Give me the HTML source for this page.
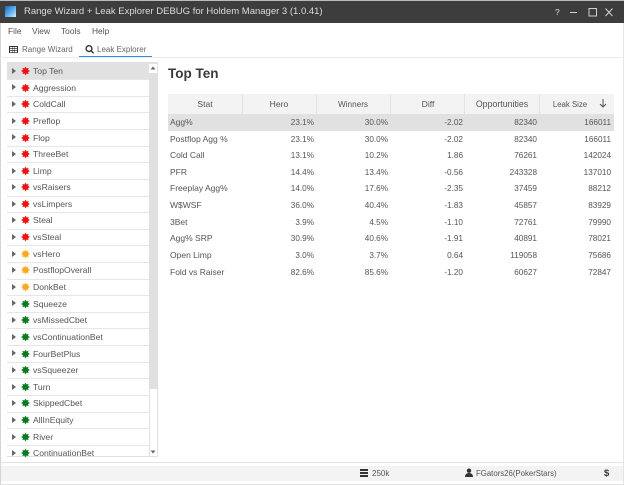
<!DOCTYPE html>
<html><head><meta charset="utf-8"><style>
html,body{margin:0;padding:0;background:#fff}
#w{position:relative;width:624px;height:485px;overflow:hidden;background:#fff;font:8.5px/12px "Liberation Sans",sans-serif;color:#555}
#w div,#w svg{position:absolute}
.t{white-space:nowrap}
.m{top:24.5px;font-size:8.4px;color:#555;white-space:nowrap}
.n{font-size:8.2px;text-align:right;width:60px;white-space:nowrap;margin-top:1px}
.h{font-size:8.6px;text-align:center;top:98px;width:74px;color:#555;white-space:nowrap}
.l{left:33px;white-space:nowrap;color:#555;font-size:8.6px}
.a{left:12px;width:0;height:0;border-left:4px solid #666;border-top:3.5px solid transparent;border-bottom:3.5px solid transparent}
.s{left:21px;width:9px;height:9px;margin-top:-.5px;background:currentColor;clip-path:polygon(50% 0,62% 22%,85% 15%,78% 38%,100% 50%,78% 62%,85% 85%,62% 78%,50% 100%,38% 78%,15% 85%,22% 62%,0 50%,22% 38%,15% 15%,38% 22%)}
.sep{left:7px;width:142px;height:1px;background:#e6e6e6}
</style></head><body><div id="w">
<div style="left:0;top:0;width:624px;height:1px;background:#bbb"></div>
<div style="left:0;top:1px;width:624px;height:22px;background:#3d3d3d"></div>
<div style="left:0;top:23px;width:1px;height:462px;background:#d4d4d4"></div>
<div style="left:623px;top:23px;width:1px;height:462px;background:#e4e4e4"></div>
<div style="left:5px;top:6px;width:11px;height:11px;background:linear-gradient(135deg,#1a63b8,#5fb3ef 55%,#d6eefc)"></div>
<div class="t" style="left:24px;top:5px;color:#dcdcdc;font-size:9.5px;line-height:13px">Range Wizard + Leak Explorer DEBUG for Holdem Manager 3 (1.0.41)</div>
<div class="t" style="left:555px;top:5.5px;color:#ddd;font-size:8.5px">?</div>
<svg style="left:568px;top:5px" width="52" height="14" fill="none" stroke="#d0d0d0" stroke-width="1"><path d="M2 7.5h7"/><path d="M21 3.5h7.5v7.5H21z"/><path d="M37.5 3.5l7 7.5M44.5 3.5l-7 7.5"/></svg>

<div class="m" style="left:8px">File</div>
<div class="m" style="left:32px">View</div>
<div class="m" style="left:61px">Tools</div>
<div class="m" style="left:92px">Help</div>

<svg style="left:9px;top:45px" width="10" height="9" fill="#333"><path d="M0 1h9v7H0zM1 2v1.2h2V2zm2.5 0v1.2h2V2zM6 2v1.2h2V2zM1 4v1.2h2V4zm2.5 0v1.2h2V4zM6 4v1.2h2V4zM1 6v1.2h2V6zm2.5 0v1.2h2V6zM6 6v1.2h2V6z" fill-rule="evenodd"/></svg>
<div class="t" style="left:22px;top:44px;font-size:8px;color:#666">Range Wizard</div>
<svg style="left:85px;top:45px" width="10" height="10" fill="none" stroke="#333" stroke-width="1.4"><circle cx="4" cy="3.6" r="2.9"/><path d="M6 5.6l2.6 2.6"/></svg>
<div class="t" style="left:97px;top:44px;font-size:8px;color:#666">Leak Explorer</div>
<div style="left:79px;top:55.5px;width:73px;height:1.5px;background:#2f8fdc"></div>
<div style="left:0;top:57px;width:624px;height:1px;background:#ececec"></div>

<div style="left:7px;top:62px;width:151px;height:395px;border-right:1px solid #e0e0e0;border-bottom:1px solid #e0e0e0;box-sizing:border-box"></div>
<div style="left:7px;top:62px;width:142px;height:17px;background:#e1e1e1"></div>
<div style="left:149px;top:62px;width:8px;height:327px;background:#e0e0e0"></div>
<div style="left:149px;top:64px;width:8px;height:9px;background:#fff"></div>
<div style="left:149px;top:389px;width:8px;height:67px;background:#fff;border-left:1px solid #e0e0e0;box-sizing:border-box"></div>
<svg style="left:149px;top:65px" width="8" height="6"><path d="M1.5 4.5L4 1.5l2.5 3z" fill="#666"/></svg>
<svg style="left:149px;top:449px" width="8" height="6"><path d="M1.5 1.5L4 4.5l2.5-3z" fill="#666"/></svg>

<div class="sep" style="top:79px"></div><div class="sep" style="top:96px"></div><div class="sep" style="top:112px"></div><div class="sep" style="top:129px"></div><div class="sep" style="top:146px"></div><div class="sep" style="top:162px"></div><div class="sep" style="top:179px"></div><div class="sep" style="top:196px"></div><div class="sep" style="top:212px"></div><div class="sep" style="top:229px"></div><div class="sep" style="top:245px"></div><div class="sep" style="top:262px"></div><div class="sep" style="top:279px"></div><div class="sep" style="top:295px"></div><div class="sep" style="top:312px"></div><div class="sep" style="top:328px"></div><div class="sep" style="top:345px"></div><div class="sep" style="top:362px"></div><div class="sep" style="top:378px"></div><div class="sep" style="top:395px"></div><div class="sep" style="top:412px"></div><div class="sep" style="top:428px"></div><div class="sep" style="top:445px"></div>

<div class="a" style="top:67.5px"></div><div class="s" style="top:67px;color:#f01010"></div><div class="l" style="top:65px">Top Ten</div>
<div class="a" style="top:84px"></div><div class="s" style="top:84px;color:#f01010"></div><div class="l" style="top:82px">Aggression</div>
<div class="a" style="top:101px"></div><div class="s" style="top:100px;color:#f01010"></div><div class="l" style="top:98px">ColdCall</div>
<div class="a" style="top:117.5px"></div><div class="s" style="top:117px;color:#f01010"></div><div class="l" style="top:115px">Preflop</div>
<div class="a" style="top:134px"></div><div class="s" style="top:134px;color:#f01010"></div><div class="l" style="top:132px">Flop</div>
<div class="a" style="top:151px"></div><div class="s" style="top:150px;color:#f01010"></div><div class="l" style="top:148px">ThreeBet</div>
<div class="a" style="top:167.5px"></div><div class="s" style="top:167px;color:#f01010"></div><div class="l" style="top:165px">Limp</div>
<div class="a" style="top:184px"></div><div class="s" style="top:183px;color:#f01010"></div><div class="l" style="top:181px">vsRaisers</div>
<div class="a" style="top:200.5px"></div><div class="s" style="top:200px;color:#f01010"></div><div class="l" style="top:198px">vsLimpers</div>
<div class="a" style="top:217px"></div><div class="s" style="top:216px;color:#f01010"></div><div class="l" style="top:214px">Steal</div>
<div class="a" style="top:234px"></div><div class="s" style="top:233px;color:#f01010"></div><div class="l" style="top:231px">vsSteal</div>
<div class="a" style="top:250.5px"></div><div class="s" style="top:250px;color:#ffa81c"></div><div class="l" style="top:248px">vsHero</div>
<div class="a" style="top:267px"></div><div class="s" style="top:266px;color:#ffa81c"></div><div class="l" style="top:264px">PostflopOverall</div>
<div class="a" style="top:283.5px"></div><div class="s" style="top:283px;color:#ffa81c"></div><div class="l" style="top:281px">DonkBet</div>
<div class="a" style="top:300px"></div><div class="s" style="top:300px;color:#0a7a1e"></div><div class="l" style="top:298px">Squeeze</div>
<div class="a" style="top:317px"></div><div class="s" style="top:316px;color:#0a7a1e"></div><div class="l" style="top:314px">vsMissedCbet</div>
<div class="a" style="top:333.5px"></div><div class="s" style="top:333px;color:#0a7a1e"></div><div class="l" style="top:331px">vsContinuationBet</div>
<div class="a" style="top:350px"></div><div class="s" style="top:350px;color:#0a7a1e"></div><div class="l" style="top:348px">FourBetPlus</div>
<div class="a" style="top:367px"></div><div class="s" style="top:366px;color:#0a7a1e"></div><div class="l" style="top:364px">vsSqueezer</div>
<div class="a" style="top:383.5px"></div><div class="s" style="top:383px;color:#0a7a1e"></div><div class="l" style="top:381px">Turn</div>
<div class="a" style="top:400px"></div><div class="s" style="top:399px;color:#0a7a1e"></div><div class="l" style="top:397px">SkippedCbet</div>
<div class="a" style="top:417px"></div><div class="s" style="top:416px;color:#0a7a1e"></div><div class="l" style="top:414px">AllInEquity</div>
<div class="a" style="top:433.5px"></div><div class="s" style="top:433px;color:#0a7a1e"></div><div class="l" style="top:431px">River</div>
<div class="a" style="top:450px"></div><div class="s" style="top:449px;color:#0a7a1e"></div><div class="l" style="top:447px;height:9px;overflow:hidden">ContinuationBet</div>

<div class="t" style="left:168px;top:65px;font-size:13.5px;line-height:18px;font-weight:bold;color:#3a3a3a">Top Ten</div>

<div style="left:168px;top:94px;width:446px;height:20px;background:#f3f3f3"></div>
<div style="left:242px;top:94px;width:1px;height:20px;background:#e2e2e2"></div>
<div style="left:316px;top:94px;width:1px;height:20px;background:#e2e2e2"></div>
<div style="left:390px;top:94px;width:1px;height:20px;background:#e2e2e2"></div>
<div style="left:464px;top:94px;width:1px;height:20px;background:#e2e2e2"></div>
<div style="left:539px;top:94px;width:1px;height:20px;background:#e2e2e2"></div>
<div class="h" style="left:168px">Stat</div><div class="h" style="left:242px">Hero</div><div class="h" style="left:316px;top:99px;font-size:8.2px">Winners</div><div class="h" style="left:391px">Diff</div><div class="h" style="left:465px;font-size:8.8px">Opportunities</div><div class="h" style="left:541px;top:99px;width:58px;font-size:7.8px">Leak Size</div>
<svg style="left:598px;top:98px" width="10" height="11" fill="none" stroke="#555"><path d="M5 1v8M2 6l3 3 3-3"/></svg>
<div style="left:168px;top:114px;width:446px;height:17px;background:#e1e1e1"></div>

<div class="t" style="left:170px;top:116px">Agg%</div><div class="n" style="left:254px;top:116px">23.1%</div><div class="n" style="left:328px;top:116px">30.0%</div><div class="n" style="left:403px;top:116px">-2.02</div><div class="n" style="left:477px;top:116px">82340</div><div class="n" style="left:551px;top:116px">166011</div>
<div class="t" style="left:170px;top:133px">Postflop Agg %</div><div class="n" style="left:254px;top:133px">23.1%</div><div class="n" style="left:328px;top:133px">30.0%</div><div class="n" style="left:403px;top:133px">-2.02</div><div class="n" style="left:477px;top:133px">82340</div><div class="n" style="left:551px;top:133px">166011</div>
<div class="t" style="left:170px;top:149px">Cold Call</div><div class="n" style="left:254px;top:149px">13.1%</div><div class="n" style="left:328px;top:149px">10.2%</div><div class="n" style="left:403px;top:149px">1.86</div><div class="n" style="left:477px;top:149px">76261</div><div class="n" style="left:551px;top:149px">142024</div>
<div class="t" style="left:170px;top:166px">PFR</div><div class="n" style="left:254px;top:166px">14.4%</div><div class="n" style="left:328px;top:166px">13.4%</div><div class="n" style="left:403px;top:166px">-0.56</div><div class="n" style="left:477px;top:166px">243328</div><div class="n" style="left:551px;top:166px">137010</div>
<div class="t" style="left:170px;top:182px">Freeplay Agg%</div><div class="n" style="left:254px;top:182px">14.0%</div><div class="n" style="left:328px;top:182px">17.6%</div><div class="n" style="left:403px;top:182px">-2.35</div><div class="n" style="left:477px;top:182px">37459</div><div class="n" style="left:551px;top:182px">88212</div>
<div class="t" style="left:170px;top:199px">W$WSF</div><div class="n" style="left:254px;top:199px">36.0%</div><div class="n" style="left:328px;top:199px">40.4%</div><div class="n" style="left:403px;top:199px">-1.83</div><div class="n" style="left:477px;top:199px">45857</div><div class="n" style="left:551px;top:199px">83929</div>
<div class="t" style="left:170px;top:216px">3Bet</div><div class="n" style="left:254px;top:216px">3.9%</div><div class="n" style="left:328px;top:216px">4.5%</div><div class="n" style="left:403px;top:216px">-1.10</div><div class="n" style="left:477px;top:216px">72761</div><div class="n" style="left:551px;top:216px">79990</div>
<div class="t" style="left:170px;top:232px">Agg% SRP</div><div class="n" style="left:254px;top:232px">30.9%</div><div class="n" style="left:328px;top:232px">40.6%</div><div class="n" style="left:403px;top:232px">-1.91</div><div class="n" style="left:477px;top:232px">40891</div><div class="n" style="left:551px;top:232px">78021</div>
<div class="t" style="left:170px;top:249px">Open Limp</div><div class="n" style="left:254px;top:249px">3.0%</div><div class="n" style="left:328px;top:249px">3.7%</div><div class="n" style="left:403px;top:249px">0.64</div><div class="n" style="left:477px;top:249px">119058</div><div class="n" style="left:551px;top:249px">75686</div>
<div class="t" style="left:170px;top:266px">Fold vs Raiser</div><div class="n" style="left:254px;top:266px">82.6%</div><div class="n" style="left:328px;top:266px">85.6%</div><div class="n" style="left:403px;top:266px">-1.20</div><div class="n" style="left:477px;top:266px">60627</div><div class="n" style="left:551px;top:266px">72847</div>

<div style="left:0;top:462px;width:624px;height:1px;background:#e2e2e2"></div>
<div style="left:1px;top:466px;width:622px;height:15px;background:#f3f3f3"></div>
<div style="left:0;top:484px;width:624px;height:1px;background:#e4e4e4"></div>
<svg style="left:360px;top:468px" width="9" height="11" fill="#333"><path d="M0 1h8v2H0zM0 4h8v2H0zM0 7h8v2H0z"/></svg>
<div class="t" style="left:372px;top:468px;font-size:8px">250k</div>
<svg style="left:465px;top:468px" width="9" height="10" fill="#333"><circle cx="4" cy="2.7" r="2.2"/><path d="M0 9c0-3 2-4 4-4s4 1 4 4z"/></svg>
<div class="t" style="left:476px;top:468px;font-size:7.8px">FGators26(PokerStars)</div>
<div class="t" style="left:604px;top:468px;font-size:9.5px;font-weight:bold;color:#333">$</div>
</div></body></html>
